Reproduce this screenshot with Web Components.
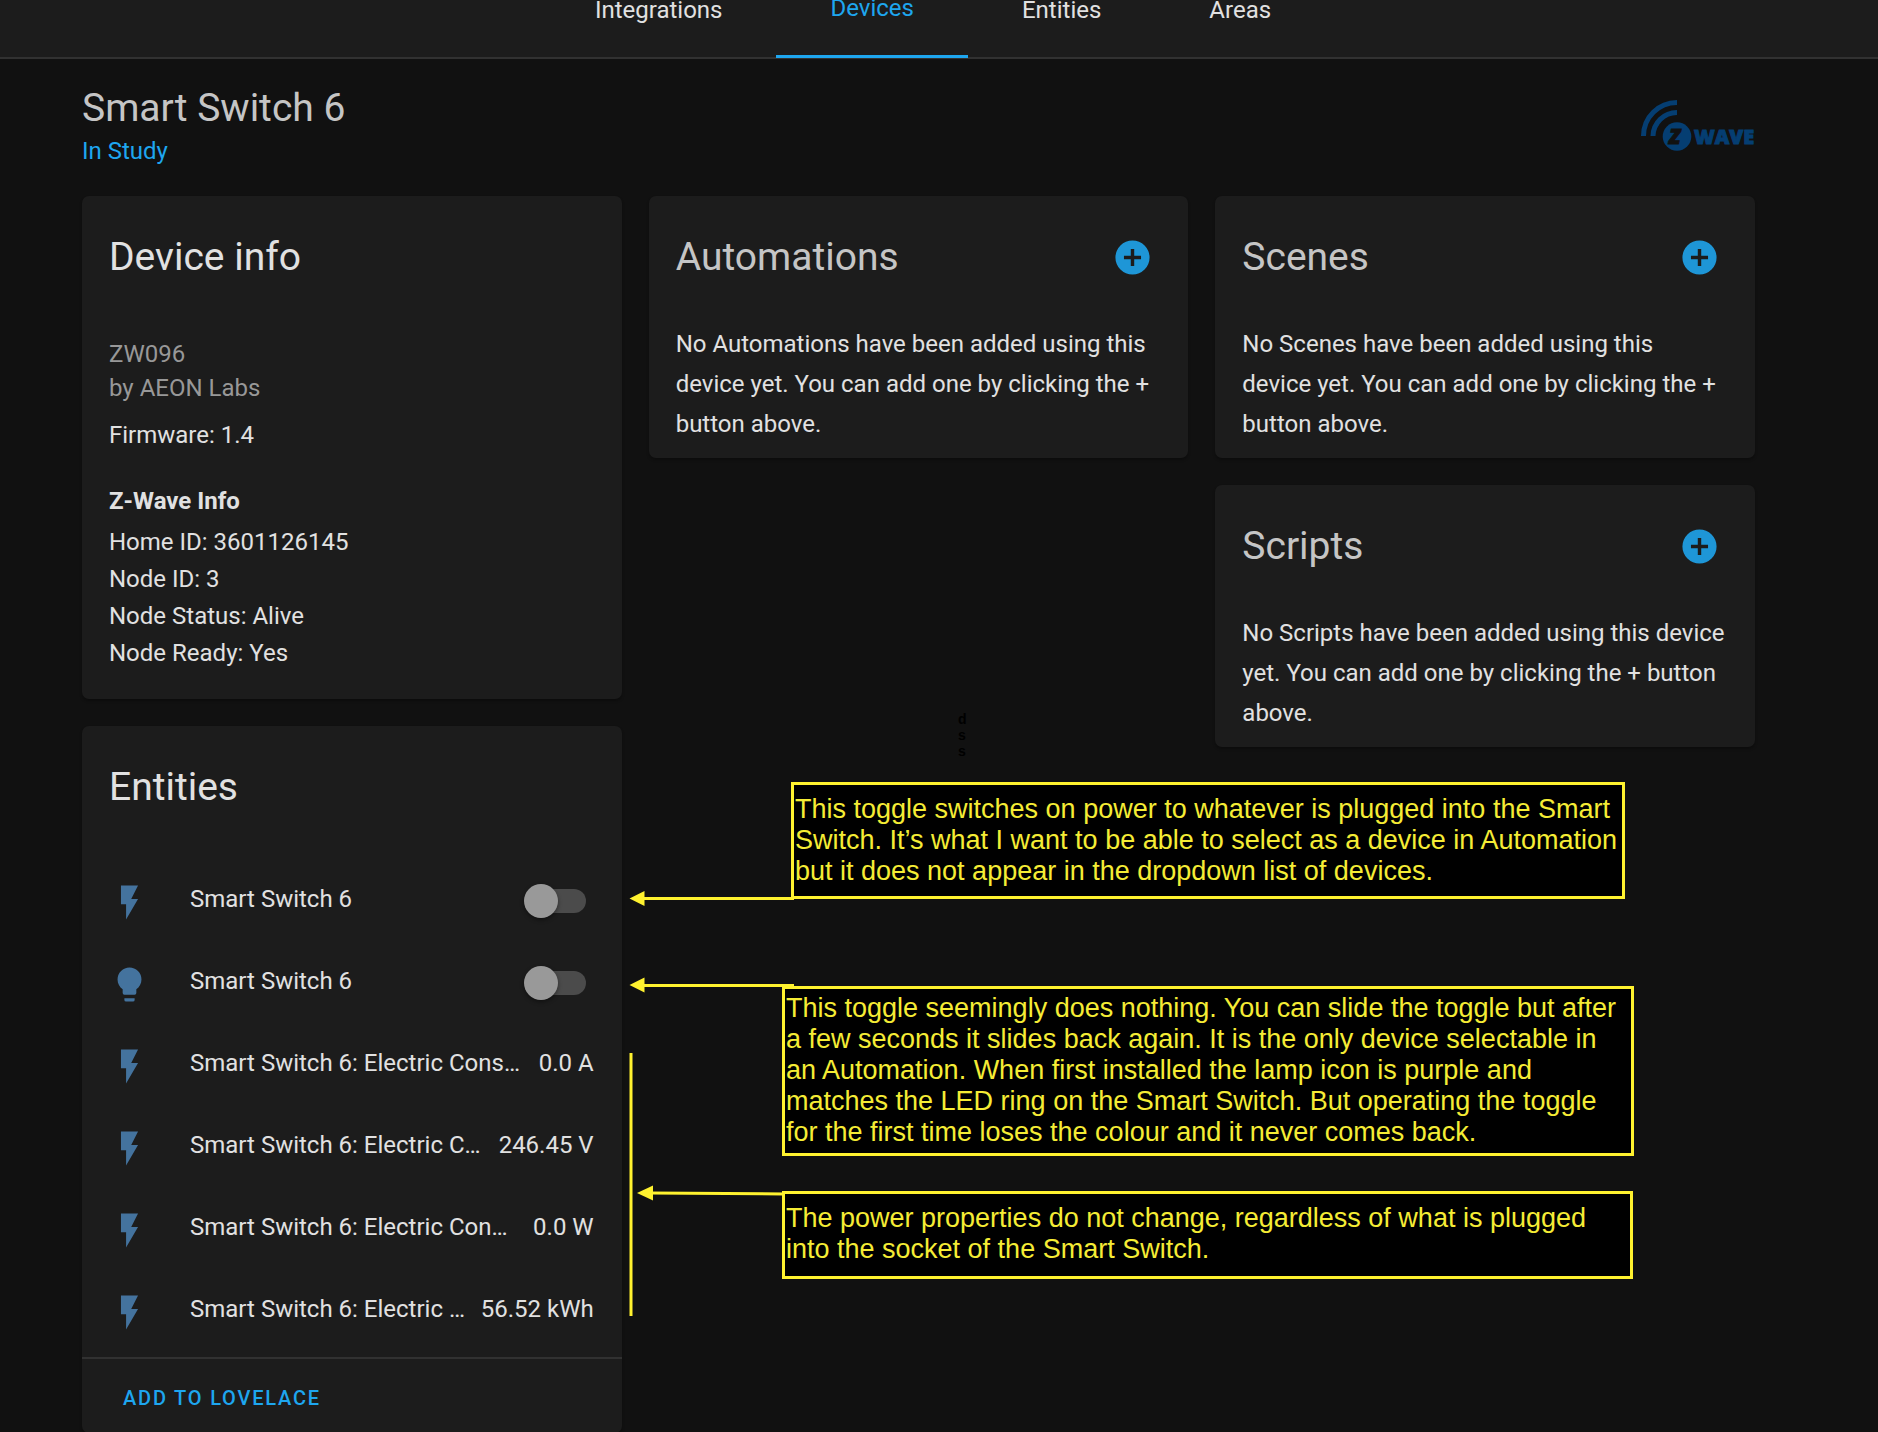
<!DOCTYPE html>
<html lang="en">
<head>
<meta charset="utf-8">
<title>Smart Switch 6</title>
<style>
  html, body { margin: 0; min-height: 100vh; background: #111111; }
  body {
    --card: #1c1c1c;
    --accent: #1ea6ef;
    --text: #e1e1e1;
    --muted: #c5c5c5;
    --dim: #989898;
    --divider: #313131;
    --mark: #fff22f;
    font: 24px/34px Roboto, "Noto Sans", sans-serif;
    color: var(--text);
    height: 100vh;
    overflow: hidden;
    position: relative;
  }
</style>
</head>
<body>
<device-page></device-page>
<note-layer></note-layer>

<script>
const define = (name, html, setup) => {
  const template = document.createElement('template');
  template.innerHTML = html;
  customElements.define(name, class extends HTMLElement {
    constructor() {
      super();
      this.attachShadow({ mode: 'open' });
    }
    connectedCallback() {
      if (this.shadowRoot.childNodes.length) return;
      const content = template.content.cloneNode(true);
      if (setup) setup(this, content);
      this.shadowRoot.append(content);
    }
  });
};

const ICONS = {
  flash: 'M7,2V13H10V22L17,10H13L17,2H7Z',
  lightbulb: 'M12,2A7,7 0 0,0 5,9C5,11.38 6.19,13.47 8,14.74V17A1,1 0 0,0 9,18H15A1,1 0 0,0 16,17V14.74C17.81,13.47 19,11.38 19,9A7,7 0 0,0 12,2M9,21A1,1 0 0,0 10,22H14A1,1 0 0,0 15,21V20H9V21Z',
  plus: 'M17,13H13V17H11V13H7V11H11V7H13V11H17M12,2A10,10 0 0,0 2,12A10,10 0 0,0 12,22A10,10 0 0,0 22,12A10,10 0 0,0 12,2Z'
};

define('app-icon', `
  <style>
    :host { display: block; width: 41px; height: 41px; }
    svg { display: block; width: 100%; height: 100%; fill: currentColor; }
  </style>
  <svg viewBox="0 0 24 24" aria-hidden="true"><path/></svg>
`, (el, content) => content.querySelector('path').setAttribute('d', ICONS[el.getAttribute('name')]));

define('app-tabs', `
  <style>
    :host { display: block; background: var(--card); border-bottom: 2px solid var(--divider); }
    nav { display: flex; justify-content: center; height: 57px; padding-right: 12px; }
    a { padding: 0 54px; line-height: 20px; color: var(--text); text-decoration: none; white-space: nowrap; }
    a[aria-current] { color: var(--accent); line-height: 16px; box-shadow: inset 0 -2px var(--accent), 0 1px var(--accent); }
  </style>
  <nav>
    <a href="#integrations">Integrations</a>
    <a href="#devices" aria-current="page">Devices</a>
    <a href="#entities">Entities</a>
    <a href="#areas">Areas</a>
  </nav>
`);

define('zwave-logo', `
  <style>
    :host { display: block; width: 114px; height: 51px; }
    svg { display: block; width: 100%; height: 100%; overflow: visible; }
    text { font-family: "Open Sans", Lato, sans-serif; font-weight: 800; }
  </style>
  <svg viewBox="0 0 114 51" role="img" aria-label="Z-Wave">
    <g fill="none" stroke="#053e72" stroke-width="5">
      <path d="M2.500 35A33.500 33.500 0 0 1 36 1.500"/>
      <path d="M12 35A24 24 0 0 1 36 11.500"/>
    </g>
    <circle cx="36" cy="35.500" r="14.300" fill="#053e72"/>
    <text x="28" y="43" font-size="21" font-style="italic" fill="#111111" stroke="#111111" stroke-width="0.800">Z</text>
    <text x="53" y="43" font-size="20" fill="#053e72" stroke="#053e72" stroke-width="1">WAVE</text>
  </svg>
`);

define('page-header', `
  <style>
    :host { display: flex; align-items: center; justify-content: space-between; padding: 25px 0 28px; }
    h1 { margin: 0 0 2px; font-size: 39px; line-height: 48px; font-weight: 400; color: var(--muted); }
    a { display: block; color: var(--accent); text-decoration: none; }
  </style>
  <div>
    <h1><slot></slot></h1>
    <a href="#study">In Study</a>
  </div>
  <zwave-logo></zwave-logo>
`);

define('app-card', `
  <style>
    :host { display: block; background: var(--card); border-radius: 7px; box-shadow: 0 2px 3px rgba(0, 0, 0, .3); }
    header { display: flex; align-items: center; justify-content: space-between; padding: 34px 35px 0 27px; }
    h2 { margin: 0; font-size: 39px; line-height: 54px; font-weight: 400; color: var(--text); }
    :host([add]) h2 { color: var(--muted); }
    button { display: block; border: 0; padding: 0; background: none; color: #1e96d7; }
  </style>
  <header><h2></h2><button type="button"><app-icon name="plus"></app-icon></button></header>
  <slot></slot>
`, (el, content) => {
  const title = el.getAttribute('heading');
  const button = content.querySelector('button');
  content.querySelector('h2').textContent = title;
  if (el.hasAttribute('add')) button.setAttribute('aria-label', 'Add to ' + title);
  else button.remove();
});

define('empty-card', `
  <style>
    :host { display: block; }
    p { margin: 0; padding: 40px 30px 14px 27px; line-height: 40px; }
  </style>
  <app-card add><p></p></app-card>
`, (el, content) => {
  const kind = el.getAttribute('kind');
  content.querySelector('app-card').setAttribute('heading', kind);
  content.querySelector('p').textContent =
    'No ' + kind + ' have been added using this device yet. You can add one by clicking the + button above.';
});

define('device-info', `
  <style>
    :host { display: block; padding: 53px 27px 27px; }
    div { line-height: 37px; }
    .model { line-height: 34px; color: var(--dim); margin-bottom: 12px; }
    h3 { margin: 29px 0 4px; font-size: 24px; line-height: 37px; font-weight: 700; }
  </style>
  <div class="model">ZW096<br>by AEON Labs</div>
  <div>Firmware: 1.4</div>
  <h3>Z-Wave Info</h3>
  <div>Home ID: 3601126145</div>
  <div>Node ID: 3</div>
  <div>Node Status: Alive</div>
  <div>Node Ready: Yes</div>
`);

define('entity-row', `
  <style>
    :host { display: flex; align-items: center; height: 82px; padding: 0 28px 0 27px; }
    app-icon { flex: none; color: #44739e; padding-top: 6px; }
    label, .name { flex: 1; min-width: 0; padding-left: 40px; overflow: hidden; text-overflow: ellipsis; white-space: nowrap; }
    .value { padding-left: 14px; white-space: nowrap; }
    input { appearance: none; display: grid; align-items: center; flex: none; width: 62px; height: 34px; margin: 4px 8px 0 0; }
    input::before, input::after { content: ""; grid-area: 1 / 1; }
    input::before { height: 24px; margin-left: 3px; border-radius: 12px; background: #4b4b4b; }
    input::after { width: 34px; height: 34px; border-radius: 50%; background: #999999; box-shadow: 0 2px 4px rgba(0, 0, 0, .4); }
    input:checked::after { justify-self: end; background: var(--accent); }
  </style>
  <app-icon></app-icon>
`, (el, content) => {
  content.querySelector('app-icon').setAttribute('name', el.getAttribute('icon'));
  const name = el.getAttribute('name');
  if (el.hasAttribute('value')) {
    const text = document.createElement('span');
    text.className = 'name';
    text.textContent = name;
    const value = document.createElement('span');
    value.className = 'value';
    value.textContent = el.getAttribute('value');
    content.append(text, value);
  } else {
    const label = document.createElement('label');
    label.htmlFor = 'toggle';
    label.textContent = name;
    const input = document.createElement('input');
    input.type = 'checkbox';
    input.id = 'toggle';
    content.append(label, input);
  }
});

define('entity-list', `
  <style>
    :host { display: block; }
    .rows { padding: 44px 0 7px; }
    footer { border-top: 2px solid var(--divider); padding: 22px 27px 18px; }
    button { display: block; border: 0; margin: 0; padding: 0 14px; background: none; color: var(--accent);
      font: 500 20px/34px Roboto, sans-serif; letter-spacing: .09em; text-transform: uppercase; }
  </style>
  <div class="rows">
    <entity-row icon="flash" name="Smart Switch 6"></entity-row>
    <entity-row icon="lightbulb" name="Smart Switch 6"></entity-row>
    <entity-row icon="flash" name="Smart Switch 6: Electric Consumption" value="0.0 A"></entity-row>
    <entity-row icon="flash" name="Smart Switch 6: Electric Consumption" value="246.45 V"></entity-row>
    <entity-row icon="flash" name="Smart Switch 6: Electric Consumption" value="0.0 W"></entity-row>
    <entity-row icon="flash" name="Smart Switch 6: Electric Consumption" value="56.52 kWh"></entity-row>
  </div>
  <footer><button type="button">Add to Lovelace</button></footer>
`);

define('device-page', `
  <style>
    :host { display: block; }
    main { padding: 0 123px 0 82px; }
    .columns { display: grid; grid-template-columns: repeat(3, minmax(0, 1fr)); gap: 27px; align-items: start; }
    .column { display: grid; grid-template-columns: minmax(0, 1fr); gap: 27px; }
  </style>
  <app-tabs></app-tabs>
  <main>
    <page-header>Smart Switch 6</page-header>
    <div class="columns">
      <div class="column">
        <app-card heading="Device info"><device-info></device-info></app-card>
        <app-card heading="Entities"><entity-list></entity-list></app-card>
      </div>
      <div class="column"><empty-card kind="Automations"></empty-card></div>
      <div class="column">
        <empty-card kind="Scenes"></empty-card>
        <empty-card kind="Scripts"></empty-card>
      </div>
    </div>
  </main>
`);

define('note-box', `
  <style>
    :host { display: block; position: absolute; box-sizing: border-box; border: 3px solid var(--mark);
      background: #000; color: #f5ec35; padding: 9px 1px; font: 27px/31px "Liberation Sans", Arial, sans-serif; }
    :host([tight]) { padding-top: 4px; }
  </style>
  <slot></slot>
`);

define('note-layer', `
  <style>
    :host { display: block; position: absolute; inset: 0; pointer-events: none; }
    svg { position: absolute; left: 0; top: 0; width: 100%; height: 100%; }
    .stray { position: absolute; left: 958px; top: 711px; width: 9px; font: 700 14px/16px "Liberation Sans", Arial, sans-serif; color: #000; }
    .first { left: 791px; top: 782px; width: 834px; height: 117px; }
    .second { left: 782px; top: 986px; width: 852px; height: 170px; }
    .third { left: 782px; top: 1191px; width: 851px; height: 88px; }
  </style>
  <div class="stray">d<br>s<br>s</div>
  <note-box class="first">This toggle switches on power to whatever is plugged into the Smart Switch. It’s what I want to be able to select as a device in Automation but it does not appear in the dropdown list of devices.</note-box>
  <note-box class="second" tight>This toggle seemingly does nothing. You can slide the toggle but after a few seconds it slides back again. It is the only device selectable in an Automation. When first installed the lamp icon is purple and matches the LED ring on the Smart Switch. But operating the toggle for the first time loses the colour and it never comes back.</note-box>
  <note-box class="third">The power properties do not change, regardless of what is plugged into the socket of the Smart Switch.</note-box>
  <svg aria-hidden="true">
    <g fill="none" stroke="#fff22f" stroke-width="3">
      <path d="M642 898.500H794"/>
      <path d="M642 985.500H794"/>
      <path d="M650 1193L784 1194"/>
      <path d="M631 1053V1316"/>
    </g>
    <g fill="#fff22f">
      <path d="M629.500 898.500L644.500 891V906Z"/>
      <path d="M629.500 985L644.500 977.500V992.500Z"/>
      <path d="M637 1193L653 1185.500V1200.500Z"/>
    </g>
  </svg>
`);
</script>
</body>
</html>
